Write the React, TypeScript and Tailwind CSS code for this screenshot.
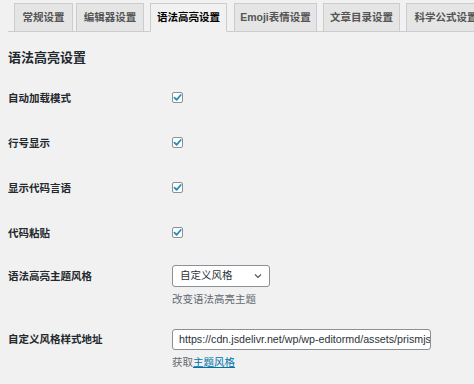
import React from "react";

const FONT = '"Liberation Sans", "Noto Sans CJK SC", sans-serif';

function Check() {
  return (
    <span className="w-[11px] h-[11px] border border-[#8c8f94] rounded-[2px] bg-white flex items-center justify-center -mt-[2px]">
      <svg width="9" height="9" viewBox="0 0 10 10">
        <path d="M1.6 5.2 L4 7.6 L8.6 2.2" fill="none" stroke="#1e8cbe" strokeWidth="1.9" strokeLinecap="round" strokeLinejoin="round" />
      </svg>
    </span>
  );
}

const tabs: { label: string; cls: string; active?: boolean }[] = [
  { label: "常规设置", cls: "w-[59px] ml-[6px]" },
  { label: "编辑器设置", cls: "w-[68px] ml-[3px]" },
  { label: "语法高亮设置", cls: "w-[77px] ml-[6px]", active: true },
  { label: "Emoji表情设置", cls: "w-[83px] ml-[7px]" },
  { label: "文章目录设置", cls: "w-[77px] ml-[6px]" },
  { label: "科学公式设置", cls: "w-[80px] ml-[6px]" },
];

export default function App() {
  const checks = ["自动加载模式", "行号显示", "显示代码言语", "代码粘贴"];
  return (
    <div className="w-[474px] h-[384px] bg-[#f1f1f1] overflow-hidden text-[#23282d]" style={{ fontFamily: FONT }}>
      <div className="pt-[3px] ml-[8px] flex items-end border-b border-[#cccccc] h-[32px] w-[520px]">
        {tabs.map((t) => (
          <div
            key={t.label}
            className={
              t.active
                ? t.cls + " shrink-0 h-[29px] -mb-[1px] border border-[#cccccc] border-b-[#f1f1f1] bg-[#f1f1f1] text-[#000000] text-[10.5px] font-semibold flex items-center justify-center whitespace-nowrap"
                : t.cls + " shrink-0 h-[28px] border border-b-0 border-[#cccccc] bg-[#e5e5e5] text-[#555555] text-[10.5px] font-semibold flex items-center justify-center whitespace-nowrap"
            }
          >
            {t.label}
          </div>
        ))}
      </div>
      <h2 className="ml-[8px] mt-[17px] text-[13px] leading-[18px] font-semibold">语法高亮设置</h2>
      <div className="mt-[9px] pl-[8px]">
        {checks.map((c) => (
          <div key={c} className="h-[45px] flex items-center">
            <div className="w-[164px] text-[10.5px] font-semibold">{c}</div>
            <Check />
          </div>
        ))}
        <div className="flex pt-[9px]">
          <div className="w-[164px] text-[10.5px] font-semibold leading-[22px]">语法高亮主题风格</div>
          <div className="flex flex-col">
            <div className="w-[98px] h-[22px] border border-[#8c8f94] rounded-[3px] bg-white flex items-center justify-between pl-[7px] pr-[7px] text-[10.5px] text-[#2c3338]">
              <span>自定义风格</span>
              <svg width="8" height="6" viewBox="0 0 8 6">
                <path d="M1 1.5 L4 4.5 L7 1.5" fill="none" stroke="#50575e" strokeWidth="1.2" />
              </svg>
            </div>
            <div className="mt-[5px] text-[10.5px] leading-[14px] text-[#646970]">改变语法高亮主题</div>
          </div>
        </div>
        <div className="flex mt-[23px]">
          <div className="w-[164px] text-[10.5px] font-semibold leading-[21px]">自定义风格样式地址</div>
          <div className="flex flex-col">
            <div className="w-[259px] h-[21px] border border-[#8c8f94] rounded-[3px] bg-white flex items-center pl-[6px] overflow-hidden text-[10.7px] text-[#2c3338] whitespace-nowrap">
              https://cdn.jsdelivr.net/wp/wp-editormd/assets/prismjs
            </div>
            <div className="mt-[5px] text-[10.5px] leading-[14px] text-[#646970]">
              获取<span className="text-[#0073aa] underline">主题风格</span>
            </div>
          </div>
        </div>
      </div>
    </div>
  );
}
